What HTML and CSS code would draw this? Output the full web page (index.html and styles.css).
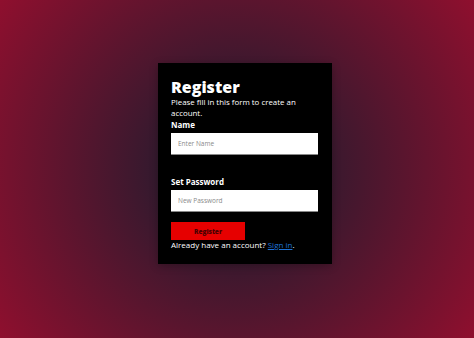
FILE: index.html
```html
<!DOCTYPE html>
<html lang="en">
<head>
<meta charset="utf-8">
<title>Register</title>
<link rel="stylesheet" href="styles.css">
</head>
<body>
<div class="page">
  <form class="card">
    <h1 class="title">Register</h1>
    <p class="subtitle">Please fill in this form to create an account.</p>
    <label class="label" for="name">Name</label>
    <input class="field" id="name" type="text" placeholder="Enter Name">
    <label class="label label-pw" for="pw">Set Password</label>
    <input class="field" id="pw" type="password" placeholder="New Password">
    <button class="btn" type="button">Register</button>
    <p class="signin">Already have an account? <a href="#">Sign in</a>.</p>
  </form>
</div>
</body>
</html>
```
FILE: styles.css
```css
html, body {
  margin: 0;
  padding: 0;
  height: 100%;
}
body {
  font-family: "Open Sans", "DejaVu Sans", sans-serif;
  background: radial-gradient(circle at 50% 50%, #2a1a2e 0%, #2d1a2e 22%, #8f0f2e 100%);
  color: #fff;
}
.page {
  height: 338px;
  box-sizing: border-box;
  padding: 63px 0 0 158px;
  display: flex;
  align-items: flex-start;
}
.card {
  width: 174px;
  height: 201px;
  box-sizing: border-box;
  background: #000;
  padding: 14px 13px 0 13px;
  display: flex;
  flex-direction: column;
  box-shadow: 0 2px 8px rgba(0,0,0,0.25);
}
.title {
  margin: 0;
  font-size: 16px;
  font-weight: 800;
  line-height: 20px;
}
.subtitle {
  margin: 0;
  font-size: 7.9px;
  font-weight: 500;
  line-height: 11px;
}
.label {
  font-size: 8px;
  font-weight: 700;
  line-height: 11px;
  margin-top: 0;
}
.label-pw {
  margin-top: 21px;
}
.field {
  margin-top: 3px;
  height: 22px;
  box-sizing: border-box;
  width: 147px;
  border: none;
  border-bottom: 1px solid #888;
  background: #fff;
  padding: 0 7px;
  font-family: inherit;
  font-size: 6.5px;
  color: #333;
  outline: none;
}
.field::placeholder {
  color: #8a8a8a;
}
.btn {
  margin-top: 10px;
  width: 74px;
  height: 18px;
  border: none;
  background: #e60000;
  color: #4a0000;
  font-family: inherit;
  font-weight: 800;
  font-size: 6.5px;
  padding: 0;
}
.signin {
  margin: 0;
  font-size: 8px;
  font-weight: 500;
  line-height: 10px;
}
.signin a {
  color: #1f73d6;
}
```
